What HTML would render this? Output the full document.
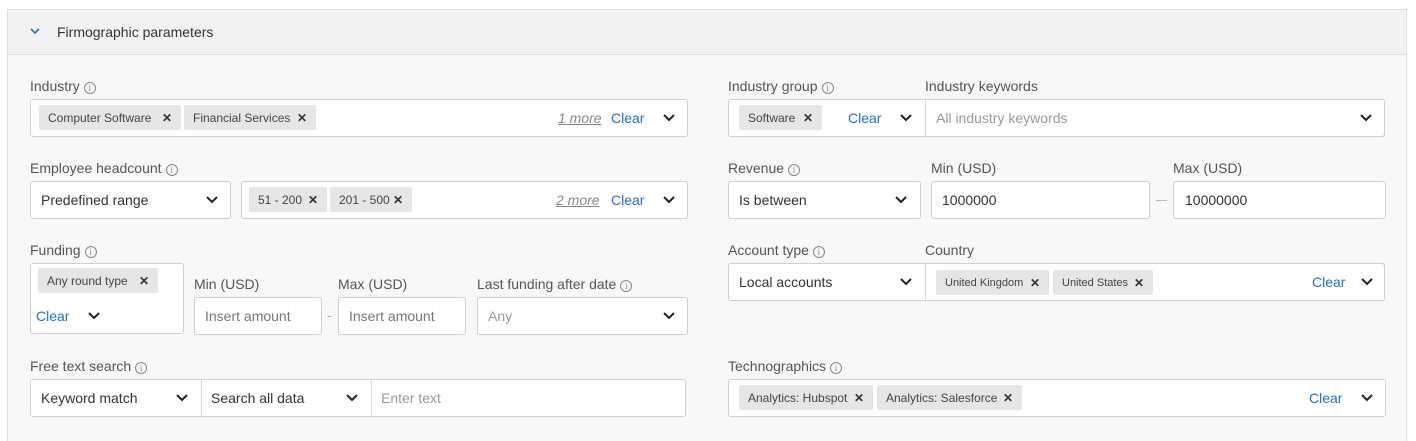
<!DOCTYPE html>
<html><head><meta charset="utf-8"><style>
*{box-sizing:border-box;margin:0;padding:0}
html,body{width:1416px;height:441px;overflow:hidden}
body{background:#fff;font-family:"Liberation Sans",sans-serif;position:relative;color:#333}
.panel{position:absolute;left:7px;top:9px;width:1400px;height:432px;background:#f8f8f8;border:1px solid #dedede;border-bottom:0}
.hdr{position:absolute;left:7px;top:9px;width:1400px;height:46px;background:#f2f2f2;border:1px solid #dedede}
.a{position:absolute}
.lbl{position:absolute;font-size:14px;color:#555;line-height:16px}
.info{display:inline-block;width:12px;height:12px;border:1px solid #888;border-radius:50%;font-size:9px;line-height:10px;text-align:center;color:#888;vertical-align:0px;margin-left:4px;font-family:"Liberation Serif",serif}
.box{position:absolute;background:#fff;border:1px solid #cfcfcf;border-radius:3px}
.chip{position:absolute;height:25px;background:#e6e6e6;border-radius:2px;font-size:12px;color:#444;line-height:26px;padding-left:9px}
.chip b{position:absolute;right:9px;top:0;font-size:12px;color:#333}
.txt{position:absolute;font-size:14px;line-height:16px}
.blue{color:#1f6fd1}
.ph{color:#999}
.more{color:#888;text-decoration:underline;font-style:italic;font-size:14px}
.sep{position:absolute;top:0;bottom:0;width:1px;background:#d8d8d8}
svg.ch{position:absolute;width:12px;height:8px}
</style></head><body>
<div class="panel"></div>
<div class="hdr"></div>
<svg class="a" style="left:30px;top:28px" width="10" height="7"><polyline points="1,1 5,5 9,1" fill="none" stroke="#1f6fd1" stroke-width="1.6"/></svg>
<div class="txt" style="left:57px;top:24px;color:#333">Firmographic parameters</div>

<div class="lbl" style="left:30px;top:78px">Industry<span class="info">i</span></div>
<div class="box" style="left:30px;top:99px;width:658px;height:38px"></div>
<div class="chip" style="left:39px;top:105px;width:142px">Computer Software<b>✕</b></div>
<div class="chip" style="left:184px;top:105px;width:132px">Financial Services<b>✕</b></div>
<div class="txt more" style="left:558px;top:110px">1 more</div>
<div class="txt blue" style="left:611px;top:110px">Clear</div>
<svg class="ch" style="left:663px;top:114px"><polyline points="1,1 6,6 11,1" fill="none" stroke="#222" stroke-width="2"/></svg>

<div class="lbl" style="left:30px;top:160px">Employee headcount<span class="info">i</span></div>
<div class="box" style="left:30px;top:181px;width:201px;height:38px"></div>
<div class="txt" style="left:41px;top:192px">Predefined range</div>
<svg class="ch" style="left:206px;top:196px"><polyline points="1,1 6,6 11,1" fill="none" stroke="#222" stroke-width="2"/></svg>
<div class="box" style="left:241px;top:181px;width:447px;height:38px"></div>
<div class="chip" style="left:249px;top:187px;width:78px">51 - 200<b>✕</b></div>
<div class="chip" style="left:330px;top:187px;width:82px">201 - 500<b>✕</b></div>
<div class="txt more" style="left:556px;top:192px">2 more</div>
<div class="txt blue" style="left:611px;top:192px">Clear</div>
<svg class="ch" style="left:663px;top:196px"><polyline points="1,1 6,6 11,1" fill="none" stroke="#222" stroke-width="2"/></svg>

<div class="lbl" style="left:30px;top:242px">Funding<span class="info">i</span></div>
<div class="box" style="left:30px;top:263px;width:154px;height:71px"></div>
<div class="chip" style="left:38px;top:268px;width:120px">Any round type<b>✕</b></div>
<div class="txt blue" style="left:36px;top:308px">Clear</div>
<svg class="ch" style="left:88px;top:312px"><polyline points="1,1 6,6 11,1" fill="none" stroke="#222" stroke-width="2"/></svg>
<div class="lbl" style="left:194px;top:276px">Min (USD)</div>
<div class="box" style="left:194px;top:297px;width:128px;height:38px"></div>
<div class="txt ph" style="left:205px;top:308px;color:#777">Insert amount</div>
<div class="txt" style="left:327px;top:307px;color:#aaa">-</div>
<div class="lbl" style="left:338px;top:276px">Max (USD)</div>
<div class="box" style="left:338px;top:297px;width:128px;height:38px"></div>
<div class="txt ph" style="left:349px;top:308px;color:#777">Insert amount</div>
<div class="lbl" style="left:477px;top:276px">Last funding after date<span class="info">i</span></div>
<div class="box" style="left:477px;top:297px;width:211px;height:38px"></div>
<div class="txt ph" style="left:488px;top:308px">Any</div>
<svg class="ch" style="left:663px;top:312px"><polyline points="1,1 6,6 11,1" fill="none" stroke="#222" stroke-width="2"/></svg>

<div class="lbl" style="left:30px;top:358px">Free text search<span class="info">i</span></div>
<div class="box" style="left:30px;top:379px;width:656px;height:38px"><div class="sep" style="left:170px"></div><div class="sep" style="left:340px"></div></div>
<div class="txt" style="left:41px;top:390px">Keyword match</div>
<svg class="ch" style="left:176px;top:394px"><polyline points="1,1 6,6 11,1" fill="none" stroke="#222" stroke-width="2"/></svg>
<div class="txt" style="left:211px;top:390px">Search all data</div>
<svg class="ch" style="left:346px;top:394px"><polyline points="1,1 6,6 11,1" fill="none" stroke="#222" stroke-width="2"/></svg>
<div class="txt ph" style="left:381px;top:390px">Enter text</div>

<div class="lbl" style="left:728px;top:78px">Industry group<span class="info">i</span></div>
<div class="lbl" style="left:925px;top:78px">Industry keywords</div>
<div class="box" style="left:728px;top:99px;width:657px;height:38px"><div class="sep" style="left:196px"></div></div>
<div class="chip" style="left:739px;top:105px;width:83px">Software<b>✕</b></div>
<div class="txt blue" style="left:848px;top:110px">Clear</div>
<svg class="ch" style="left:900px;top:114px"><polyline points="1,1 6,6 11,1" fill="none" stroke="#222" stroke-width="2"/></svg>
<div class="txt ph" style="left:936px;top:110px">All industry keywords</div>
<svg class="ch" style="left:1360px;top:114px"><polyline points="1,1 6,6 11,1" fill="none" stroke="#222" stroke-width="2"/></svg>

<div class="lbl" style="left:728px;top:160px">Revenue<span class="info">i</span></div>
<div class="box" style="left:728px;top:181px;width:193px;height:38px"></div>
<div class="txt" style="left:739px;top:192px">Is between</div>
<svg class="ch" style="left:895px;top:196px"><polyline points="1,1 6,6 11,1" fill="none" stroke="#222" stroke-width="2"/></svg>
<div class="lbl" style="left:931px;top:160px">Min (USD)</div>
<div class="box" style="left:931px;top:181px;width:219px;height:38px"></div>
<div class="txt" style="left:942px;top:192px">1000000</div>
<div class="a" style="left:1156px;top:200px;width:11px;height:1px;background:#bbb"></div>
<div class="lbl" style="left:1173px;top:160px">Max (USD)</div>
<div class="box" style="left:1173px;top:181px;width:213px;height:38px"></div>
<div class="txt" style="left:1185px;top:192px">10000000</div>

<div class="lbl" style="left:728px;top:242px">Account type<span class="info">i</span></div>
<div class="lbl" style="left:925px;top:242px">Country</div>
<div class="box" style="left:728px;top:263px;width:657px;height:38px"><div class="sep" style="left:196px"></div></div>
<div class="txt" style="left:739px;top:274px">Local accounts</div>
<svg class="ch" style="left:900px;top:278px"><polyline points="1,1 6,6 11,1" fill="none" stroke="#222" stroke-width="2"/></svg>
<div class="chip" style="left:936px;top:270px;width:113px;font-size:11px">United Kingdom<b>✕</b></div>
<div class="chip" style="left:1053px;top:270px;width:100px;font-size:11px">United States<b>✕</b></div>
<div class="txt blue" style="left:1312px;top:274px">Clear</div>
<svg class="ch" style="left:1361px;top:278px"><polyline points="1,1 6,6 11,1" fill="none" stroke="#222" stroke-width="2"/></svg>

<div class="lbl" style="left:728px;top:358px">Technographics<span class="info">i</span></div>
<div class="box" style="left:728px;top:379px;width:658px;height:38px"></div>
<div class="chip" style="left:739px;top:385px;width:134px">Analytics: Hubspot<b>✕</b></div>
<div class="chip" style="left:877px;top:385px;width:145px">Analytics: Salesforce<b>✕</b></div>
<div class="txt blue" style="left:1309px;top:390px">Clear</div>
<svg class="ch" style="left:1361px;top:394px"><polyline points="1,1 6,6 11,1" fill="none" stroke="#222" stroke-width="2"/></svg>
</body></html>
